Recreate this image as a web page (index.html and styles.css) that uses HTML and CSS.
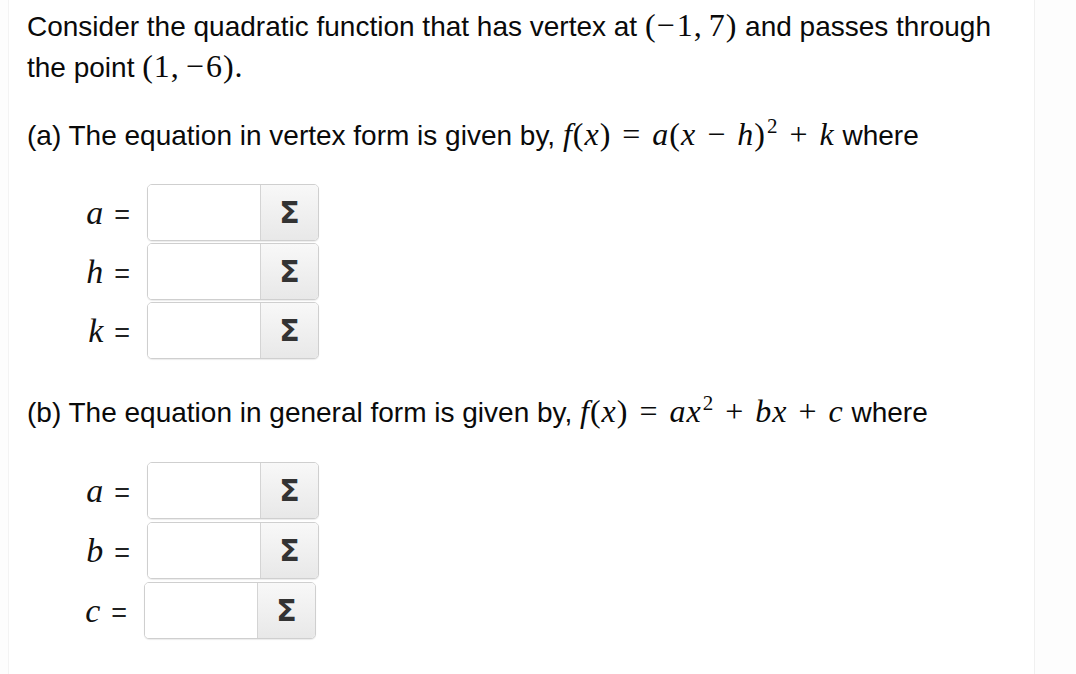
FILE: index.html
```html
<!DOCTYPE html>
<html lang="en">
<head>
<meta charset="utf-8">
<title>Quadratic function</title>
<link rel="stylesheet" href="styles.css">
</head>
<body>
<div class="panel">
  <p class="prompt">Consider the quadratic function that has vertex at <span class="m">(<span class="op-u">−</span>1,<span class="sp"></span>7)</span> and passes through the point <span class="m">(1,<span class="sp"></span><span class="op-u">−</span>6).</span></p>

  <p class="part">(a) The equation in vertex form is given by, <span class="m"><i>f</i>(<i>x</i>)<span class="op">=</span><i>a</i>(<i>x</i><span class="op">−</span><i>h</i>)<sup>2</sup><span class="op">+</span><i>k</i></span> where</p>

  <div class="answers">
    <div class="row">
      <span class="lbl"><i>a</i><span class="eq">=</span></span>
      <span class="box"><span class="field"></span><span class="sigma">Σ</span></span>
    </div>
    <div class="row">
      <span class="lbl"><i>h</i><span class="eq">=</span></span>
      <span class="box"><span class="field"></span><span class="sigma">Σ</span></span>
    </div>
    <div class="row">
      <span class="lbl"><i>k</i><span class="eq">=</span></span>
      <span class="box"><span class="field"></span><span class="sigma">Σ</span></span>
    </div>
  </div>

  <p class="part part-b">(b) The equation in general form is given by, <span class="m"><i>f</i>(<i>x</i>)<span class="op">=</span><i>ax</i><sup>2</sup><span class="op">+</span><i>bx</i><span class="op">+</span><i>c</i></span> where</p>

  <div class="answers answers-b">
    <div class="row">
      <span class="lbl"><i>a</i><span class="eq">=</span></span>
      <span class="box"><span class="field"></span><span class="sigma">Σ</span></span>
    </div>
    <div class="row">
      <span class="lbl"><i>b</i><span class="eq">=</span></span>
      <span class="box"><span class="field"></span><span class="sigma">Σ</span></span>
    </div>
    <div class="row row-shift">
      <span class="lbl"><i>c</i><span class="eq">=</span></span>
      <span class="box"><span class="field"></span><span class="sigma">Σ</span></span>
    </div>
  </div>
</div>
</body>
</html>
```

FILE: styles.css
```css
html, body {
  margin: 0;
  padding: 0;
  background: #fdfdfd;
}

body {
  font-family: "Liberation Sans", Arial, Helvetica, sans-serif;
  color: #0a0a0a;
}

.panel {
  margin-left: 8px;
  width: 1027px;
  min-height: 674px;
  box-sizing: border-box;
  background: #fff;
  border-left: 1px solid #f3f3f3;
  border-right: 1px solid #f0f0f0;
  padding: 6px 0 0 18px;
}

p {
  margin: 0;
  font-size: 28px;
  line-height: 41px;
}

.prompt {
  width: 1000px;
}

.part {
  margin-top: 27px;
  white-space: nowrap;
}

.part-b {
  margin-top: 33px;
}

.m {
  font-family: "Liberation Serif", "Times New Roman", serif;
  font-size: 32px;
  line-height: 1;
  letter-spacing: 1px;
}

.m i {
  font-style: italic;
}

.m sup {
  font-size: 21px;
  line-height: 0;
  vertical-align: 0;
  position: relative;
  top: -12px;
  margin-left: 1px;
}

.op {
  margin: 0 11px;
}

.sp {
  display: inline-block;
  width: 6px;
}

.op-u {
  margin-right: 1px;
}

.answers {
  margin-top: 28px;
  display: flex;
  flex-direction: column;
  gap: 2px;
}

.answers-b {
  margin-top: 29px;
  gap: 3px;
}

.row {
  display: flex;
  align-items: center;
}

.lbl {
  width: 120px;
  display: flex;
  justify-content: flex-end;
  align-items: baseline;
  padding-right: 17px;
  box-sizing: border-box;
}

.lbl i {
  font-family: "Liberation Serif", "Times New Roman", serif;
  font-style: italic;
  font-size: 34px;
  color: #111;
}

.lbl .eq {
  font-family: "Liberation Sans", Arial, sans-serif;
  font-size: 27px;
  margin-left: 11px;
  color: #222;
}

.row-shift .lbl {
  width: 117px;
}

.box {
  display: flex;
  width: 172px;
  height: 57px;
  box-sizing: border-box;
  border: 1px solid #cfcfcf;
  border-radius: 5px;
  overflow: hidden;
  box-shadow: 0 1px 1px rgba(0, 0, 0, 0.08);
  background: #fff;
}

.field {
  flex: 1;
  background: #fff;
  border-right: 1px solid #d4d4d4;
}

.sigma {
  width: 57px;
  display: flex;
  align-items: center;
  justify-content: center;
  background: linear-gradient(#f8f8f8, #e8e8e8);
  font-family: "DejaVu Sans", sans-serif;
  font-weight: bold;
  font-size: 30px;
  color: #333;
}
```
